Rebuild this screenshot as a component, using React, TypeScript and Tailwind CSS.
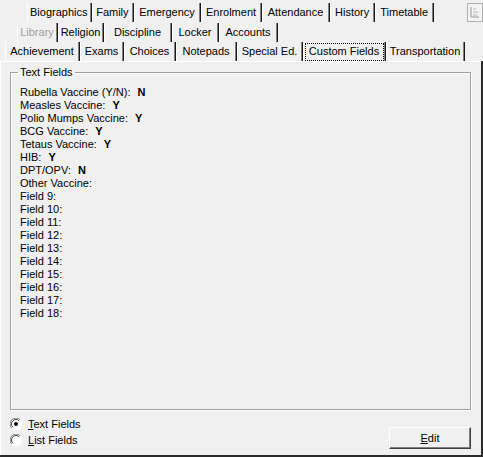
const row1 = [
  { label: "Biographics", w: "w-[65px]" },
  { label: "Family", w: "w-[43px]" },
  { label: "Emergency", w: "w-[67px]" },
  { label: "Enrolment", w: "w-[62px]" },
  { label: "Attendance", w: "w-[68px]" },
  { label: "History", w: "w-[46px]" },
  { label: "Timetable", w: "w-[59px]" },
];

const row2 = [
  { label: "Library", w: "w-[41px]", disabled: true },
  { label: "Religion", w: "w-[46px]" },
  { label: "Discipline", w: "w-[68px]" },
  { label: "Locker", w: "w-[47px]" },
  { label: "Accounts", w: "w-[59px]" },
];

const row3 = [
  { label: "Achievement", w: "w-[75px]" },
  { label: "Exams", w: "w-[44px]" },
  { label: "Choices", w: "w-[52px]" },
  { label: "Notepads", w: "w-[61px]" },
  { label: "Special Ed.", w: "w-[66px]" },
  { label: "Custom Fields", w: "w-[83px]", selected: true },
  { label: "Transportation", w: "w-[79px]" },
];

const fields: { label: string; value?: string }[] = [
  { label: "Rubella Vaccine (Y/N):", value: "N" },
  { label: "Measles Vaccine:", value: "Y" },
  { label: "Polio Mumps Vaccine:", value: "Y" },
  { label: "BCG Vaccine:", value: "Y" },
  { label: "Tetaus Vaccine:", value: "Y" },
  { label: "HIB:", value: "Y" },
  { label: "DPT/OPV:", value: "N" },
  { label: "Other Vaccine:" },
  { label: "Field 9:" },
  { label: "Field 10:" },
  { label: "Field 11:" },
  { label: "Field 12:" },
  { label: "Field 13:" },
  { label: "Field 14:" },
  { label: "Field 15:" },
  { label: "Field 16:" },
  { label: "Field 17:" },
  { label: "Field 18:" },
];

type TabProps = { label: string; w: string; disabled?: boolean; selected?: boolean };

const Tab = ({ label, w, disabled, selected }: TabProps) => (
  <div
    className={`${w} h-full flex items-center justify-center border-r border-r-[#1a1a1a] shadow-[inset_-1px_0_0_#808080,inset_1px_0_0_#ffffff] ${
      disabled ? "text-[#a0a0a0]" : "text-black"
    }`}
  >
    {selected ? (
      <span className="w-[79px] h-[18px] flex items-center justify-center border border-dotted border-black">
        {label}
      </span>
    ) : (
      label
    )}
  </div>
);

const Radio = ({ checked }: { checked?: boolean }) => (
  <svg width="12" height="12" viewBox="0 0 12 12" className="shrink-0">
    <circle cx="6" cy="6" r="5.5" fill="#ffffff" />
    <path d="M10.2 1.8 A5.5 5.5 0 0 0 1.8 10.2" fill="none" stroke="#808080" strokeWidth="1" />
    <path d="M9.2 2.8 A4.3 4.3 0 0 0 2.8 9.2" fill="none" stroke="#404040" strokeWidth="1" />
    <path d="M1.8 10.2 A5.5 5.5 0 0 0 10.2 1.8" fill="none" stroke="#ffffff" strokeWidth="1" />
    {checked && <circle cx="6" cy="6" r="2" fill="#000000" />}
  </svg>
);

export default function App() {
  return (
    <div className="w-[483px] h-[457px] overflow-hidden bg-[#f0f0f0] font-['Liberation_Sans',Arial,sans-serif] text-[11px] leading-[13px] text-black select-none">
      {/* tab rows */}
      <div className="flex h-[19px] mt-[3px] pl-[27px]">
        {row1.map((t) => (
          <Tab key={t.label} {...t} />
        ))}
        <div className="ml-[33px] mt-[0px] w-[16px] h-[19px] shrink-0 border border-[#b0b0b0] bg-[#f4f4f4] flex items-start justify-start p-[2px]">
          <svg width="10" height="13" viewBox="0 0 10 13">
            <path d="M1 1 V11 H9" fill="none" stroke="#9a9a9a" strokeWidth="1" />
            <path d="M3 3 H6 M3 6 H8 M3 9 H7" stroke="#b8b8b8" strokeWidth="1" />
          </svg>
        </div>
      </div>
      <div className="flex h-[19px] mt-[1px] pl-[17px]">
        {row2.map((t) => (
          <Tab key={t.label} {...t} />
        ))}
      </div>
      <div className="flex h-[19px] pl-[5px]">
        {row3.map((t) => (
          <Tab key={t.label} {...t} />
        ))}
      </div>

      {/* panel */}
      <div className="w-[483px] h-[396px] border-r-2 border-b-2 border-r-[#2a2a2a] border-b-[#2a2a2a] shadow-[inset_1px_1px_0_#ffffff] flex flex-col">
        <fieldset className="mt-[5px] ml-[10px] w-[461px] h-[344px] border border-[#a0a0a0] shadow-[inset_1px_1px_0_#ffffff,1px_1px_0_#ffffff] pl-[7px]">
          <legend className="px-[2px]">Text Fields</legend>
          <div className="mt-[7px] pl-[2px] flex flex-col">
            {fields.map((f) => (
              <div key={f.label} className="h-[13px] flex items-center whitespace-nowrap">
                <span>{f.label}</span>
                {f.value && <span className="ml-[7px] font-bold">{f.value}</span>}
              </div>
            ))}
          </div>
        </fieldset>

        <div className="flex justify-between pl-[10px] pr-[10px] mt-[6px]">
          <div className="flex flex-col">
            <label className="h-[16px] flex items-center gap-[6px]">
              <Radio checked />
              <span>
                <span className="underline underline-offset-[1px]">T</span>ext Fields
              </span>
            </label>
            <label className="h-[16px] flex items-center gap-[6px]">
              <Radio />
              <span>
                <span className="underline underline-offset-[1px]">L</span>ist Fields
              </span>
            </label>
          </div>
          <button className="mt-[11px] w-[82px] h-[22px] flex items-center justify-center border border-t-white border-l-white border-r-[#404040] border-b-[#404040] shadow-[inset_-1px_-1px_0_#808080] bg-[#f0f0f0]">
            <span>
              <span className="underline underline-offset-[1px]">E</span>dit
            </span>
          </button>
        </div>
      </div>
    </div>
  );
}
